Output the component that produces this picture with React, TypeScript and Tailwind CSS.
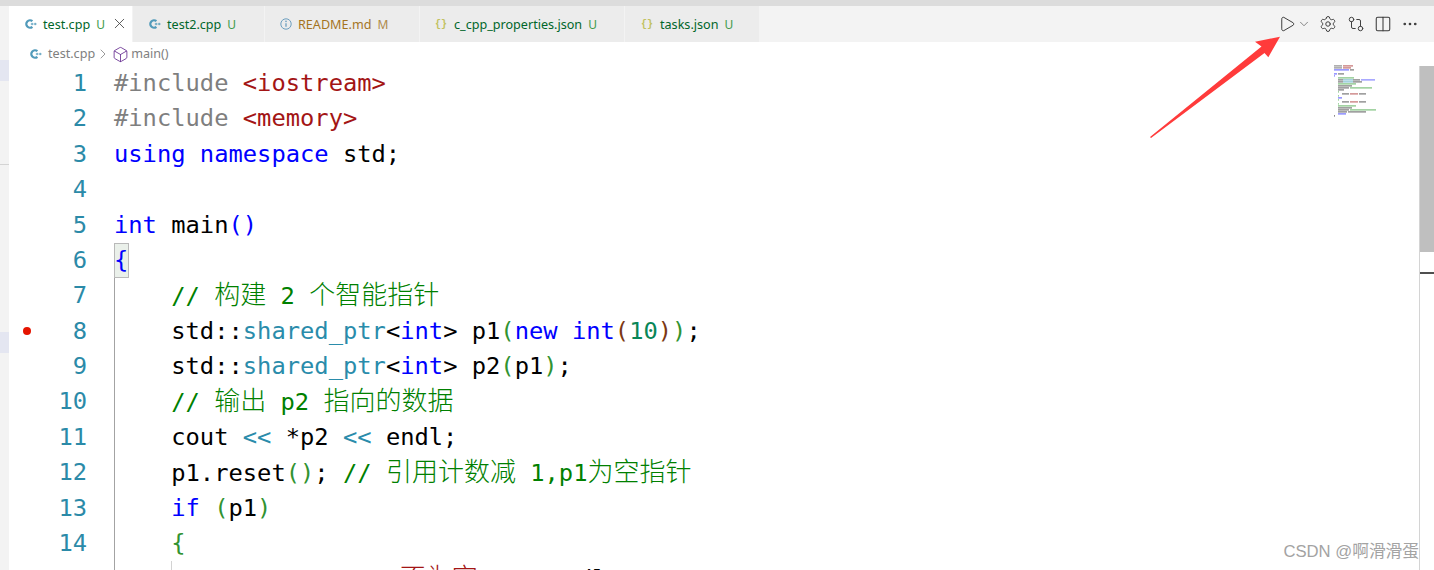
import React from "react";
import { X, Play, ChevronDown, Settings, GitCompare, Columns2, Ellipsis, Box, ChevronRight } from "lucide-react";

const G = "text-[#7f7f7f]"; // preprocessor
const R = "text-[#a31515]"; // string
const B = "text-[#0000ff]"; // keyword
const K = "text-[#000000]";
const T = "text-[#2a8cab]"; // type
const C = "text-[#008000]"; // comment
const N = "text-[#098658]"; // number
const P = "text-[#319331]"; // bracket level 2
const W = "text-[#7b3814]"; // bracket level 3
const CJ = "text-[26px] font-light";

type Seg = [string, string] | [string, string, boolean];

const lines: { s: Seg[]; guide?: boolean; bracket?: boolean; deep?: boolean; dot?: boolean }[] = [
  { s: [["#include ", G], ["<iostream>", R]] },
  { s: [["#include ", G], ["<memory>", R]] },
  { s: [["using namespace", B], [" std;", K]] },
  { s: [[" ", K]] },
  { s: [["int", B], [" main", K], ["()", B]] },
  { s: [["{", B]], bracket: true },
  { s: [["    // ", C], ["构建", C, true], [" 2 ", C], ["个智能指针", C, true]], guide: true },
  { s: [["    std::", K], ["shared_ptr", T], ["<", K], ["int", B], ["> p1", K], ["(", P], ["new int", B], ["(", W], ["10", N], [")", W], [")", P], [";", K]], guide: true, dot: true },
  { s: [["    std::", K], ["shared_ptr", T], ["<", K], ["int", B], ["> p2", K], ["(", P], ["p1", K], [")", P], [";", K]], guide: true },
  { s: [["    // ", C], ["输出", C, true], [" p2 ", C], ["指向的数据", C, true]], guide: true },
  { s: [["    cout ", K], ["<<", T], [" *p2 ", K], ["<<", T], [" endl;", K]], guide: true },
  { s: [["    p1.reset", K], ["()", P], ["; ", K], ["// ", C], ["引用计数减", C, true], [" 1,p1", C], ["为空指针", C, true]], guide: true },
  { s: [["    ", K], ["if", B], [" ", K], ["(", P], ["p1", K], [")", P]], guide: true },
  { s: [["    ", K], ["{", P]], guide: true },
  { s: [["        cout ", K], ["<<", T], [" ", K], ["\"p1 ", R], ["不为空", R, true], ["\"", R], [" ", K], ["<<", T], [" endl;", K]], guide: true, deep: true },
];

function CppIcon() {
  return (
    <svg viewBox="0 0 12 12" className="w-[12px] h-[12px] shrink-0" fill="none">
      <path d="M7.4 3.2A3.7 3.7 0 1 0 7.4 8.8" stroke="#519aba" strokeWidth="2.2" />
      <path d="M5.8 6h2.6M7.1 4.8v2.4M8.8 6h2.8M10.2 4.8v2.4" stroke="#519aba" strokeWidth="0.9" />
    </svg>
  );
}

function InfoIcon() {
  return (
    <svg viewBox="0 0 12 12" className="w-[12px] h-[12px] shrink-0" fill="none">
      <circle cx="6" cy="6" r="5.2" stroke="#6d9fbf" strokeWidth="1" />
      <path d="M6 5.2v3.6" stroke="#6d9fbf" strokeWidth="1.3" />
      <circle cx="6" cy="3.4" r="0.8" fill="#6d9fbf" />
    </svg>
  );
}

function Json() {
  return <span className="w-[12px] shrink-0 pt-[1px] text-[10px] leading-none font-['Liberation_Mono',monospace] font-bold text-[#c2c25e] whitespace-pre">{"{}"}</span>;
}

const mm: [number, number, string][][] = [
  [[0, 8, "#b0b0b0"], [9, 10, "#d59a9a"]],
  [[0, 8, "#b0b0b0"], [9, 8, "#d59a9a"]],
  [[0, 15, "#9a9aff"], [16, 4, "#a0a0a0"]],
  [],
  [[0, 3, "#9a9aff"], [4, 6, "#a0a0a0"]],
  [[0, 1, "#9a9aff"]],
  [[4, 16, "#a3d3a3"]],
  [[4, 5, "#a0a0a0"], [9, 10, "#a5d2de"], [19, 7, "#a0a0a0"], [27, 14, "#a9a9ff"]],
  [[4, 5, "#a0a0a0"], [9, 10, "#a5d2de"], [19, 9, "#a0a0a0"]],
  [[4, 18, "#a3d3a3"]],
  [[4, 14, "#a0a0a0"]],
  [[4, 11, "#a0a0a0"], [16, 22, "#a3d3a3"]],
  [[4, 6, "#a0a0a0"]],
  [[4, 1, "#a3d3a3"]],
  [[8, 7, "#a0a0a0"], [16, 8, "#d59a9a"], [25, 7, "#a0a0a0"]],
  [[4, 1, "#a3d3a3"]],
  [[4, 4, "#9a9aff"]],
  [[4, 1, "#a3d3a3"]],
  [[8, 7, "#a0a0a0"], [16, 8, "#d59a9a"], [25, 7, "#a0a0a0"]],
  [[4, 1, "#a3d3a3"]],
  [[4, 18, "#a3d3a3"]],
  [[4, 14, "#a0a0a0"]],
  [[4, 11, "#a0a0a0"], [16, 26, "#a3d3a3"]],
  [[4, 9, "#a0a0a0"], [14, 18, "#a0a0a0"]],
  [[4, 8, "#9a9aff"]],
  [[0, 1, "#8a8a8a"]],
];

function Minimap() {
  return (
    <svg width="48" height="54" className="absolute left-[1333px] top-[65px]">
      {mm.map((row, y) =>
        row.map(([x, w, c], i) => <rect key={y + "-" + i} x={x + 1} y={y * 2} width={w} height={1.7} fill={c} />)
      )}
    </svg>
  );
}

function Tab({ w, pl, active, icon, label, badge, color, badgeColor }: { w: string; pl: string; active?: boolean; icon: React.ReactNode; label: string; badge: string; color: string; badgeColor: string }) {
  return (
    <div className={`${w} ${pl} h-full flex items-center shrink-0 border-r border-[#f3f3f3] ${active ? "bg-white" : "bg-[#ececec]"}`}>
      {icon}
      <span className={`ml-[6px] pt-[2px] text-[12.6px] ${color}`}>{label}</span>
      <span className={`ml-[6px] pt-[2px] text-[12px] ${badgeColor}`}>{badge}</span>
      {active && <X className="ml-[6px] -mt-[2px] w-[17px] h-[17px] text-[#424242]" strokeWidth={1.2} />}
    </div>
  );
}

export default function App() {
  return (
    <div className="relative w-[1434px] h-[570px] overflow-hidden bg-white flex flex-col font-['Noto_Sans','Noto_Sans_CJK_SC',sans-serif]">
      <div className="h-[6px] shrink-0 bg-[#dcdcdc]" />
      <div className="flex-1 flex min-h-0">
        <div className="w-[9px] shrink-0 bg-[#f3f3f3] flex flex-col">
          <div className="h-[54px]" />
          <div className="h-[21px] bg-[#e4e6f1]" />
          <div className="h-[83px]" />
          <div className="h-[1px] bg-[#d4d4d4]" />
          <div className="h-[167px]" />
          <div className="h-[21px] bg-[#e4e6f1]" />
        </div>
        <div className="flex-1 min-w-0 flex flex-col">
          <div className="h-[36px] shrink-0 bg-[#f3f3f3] flex items-center">
            <Tab w="w-[124px]" pl="pl-[16px]" active icon={<CppIcon />} label="test.cpp" badge="U" color="text-[#00662a]" badgeColor="text-[#3f9a4a]" />
            <Tab w="w-[132px]" pl="pl-[16px]" icon={<CppIcon />} label="test2.cpp" badge="U" color="text-[#00662a]" badgeColor="text-[#3f9a4a]" />
            <Tab w="w-[155px]" pl="pl-[15px]" icon={<InfoIcon />} label="README.md" badge="M" color="text-[#a5741f]" badgeColor="text-[#b08a4a]" />
            <div className="w-[205px] h-full flex items-center pl-[15px] shrink-0 border-r border-[#f3f3f3] bg-[#ececec]">
              <Json />
              <span className="ml-[7px] pt-[2px] text-[12.6px] text-[#00662a]">c_cpp_properties.json</span>
              <span className="ml-[6px] pt-[2px] text-[12px] text-[#3f9a4a]">U</span>
            </div>
            <div className="w-[134px] h-full flex items-center pl-[16px] shrink-0 bg-[#ececec]">
              <Json />
              <span className="ml-[7px] pt-[2px] text-[12.6px] text-[#00662a]">tasks.json</span>
              <span className="ml-[6px] pt-[2px] text-[12px] text-[#3f9a4a]">U</span>
            </div>
            <div className="flex-1 flex items-center justify-end pr-[15px] text-[#3b3b3b]">
              <Play className="w-[18px] h-[18px]" strokeWidth={1.3} />
              <ChevronDown className="ml-px w-[14px] h-[14px] text-[#616161]" strokeWidth={1.3} />
              <Settings className="ml-[8px] w-[18px] h-[18px]" strokeWidth={1.3} />
              <GitCompare className="ml-[10px] w-[18px] h-[18px]" strokeWidth={1.3} />
              <Columns2 className="ml-[9px] w-[18px] h-[18px]" strokeWidth={1.4} />
              <Ellipsis className="ml-[9px] w-[18px] h-[18px]" strokeWidth={1.6} />
            </div>
          </div>
          <div className="h-[24px] shrink-0 flex items-center pl-[21px] text-[12.6px] text-[#808080]">
            <CppIcon />
            <span className="ml-[6px]">test.cpp</span>
            <ChevronRight className="w-[16px] h-[16px] text-[#808080]" strokeWidth={1.2} />
            <Box className="ml-px w-[17px] h-[17px] text-[#652d90]" strokeWidth={1.2} />
            <span className="ml-[2px]">main()</span>
          </div>
          <div className="flex-1 min-h-0 flex">
            <div className="flex-1 min-w-0 font-['DejaVu_Sans_Mono','Noto_Sans_CJK_SC',monospace] text-[23.78px] whitespace-pre">
              {lines.map((l, i) => (
                <div key={i} className="relative h-[35.38px] leading-[35.38px] flex">
                  {l.dot && <div className="absolute left-[14px] top-[13px] w-[8px] h-[8px] rounded-full bg-[#e51400]" />}
                  <div className="w-[78px] text-right text-[#2b8aa8]">{i < 14 ? i + 1 : ""}</div>
                  <div className={`ml-[27px] flex-1 ${l.guide ? "shadow-[inset_1px_0_0_#a3a3a3]" : ""}`}>
                    {l.bracket ? (
                      <span className="inline-block w-[15px] h-[35.38px] bg-[#eaf0ea] shadow-[inset_0_0_0_1px_#b9b9b9] text-[#0000ff]">{"{"}</span>
                    ) : l.deep ? (
                      <div className="ml-[57px] h-full shadow-[inset_1px_0_0_#d3d3d3]">
                        <span className="ml-[57px]">
                          {l.s.map(([t, c, cj], j) => (
                            <span key={j} className={`${c} ${cj ? CJ : ""}`}>{j === 0 ? t.trimStart() : t}</span>
                          ))}
                        </span>
                      </div>
                    ) : (
                      l.s.map(([t, c, cj], j) => (
                        <span key={j} className={`${c} ${cj ? CJ : ""}`}>{t}</span>
                      ))
                    )}
                  </div>
                </div>
              ))}
            </div>
            <div className="w-[15px] shrink-0 border-l border-[#d4d4d4] flex flex-col">
              <div className="h-[186px] bg-[#bfbfbf]" />
              <div className="h-[20px]" />
              <div className="h-[2px] bg-[#4f4f4f]" />
            </div>
          </div>
        </div>
      </div>
      <Minimap />
      <svg className="absolute left-0 top-0 pointer-events-none" width="1434" height="570">
        <polygon points="1150,137 1261.5,46.5 1255,41.7 1280,36.7 1268.3,57.3 1264.5,53 1151,138" fill="#ff3b3b" />
      </svg>
      <div className="absolute right-[15px] bottom-[6px] text-[16.7px] leading-[24px] text-[#a3a3a3] font-['Liberation_Sans','Noto_Sans_CJK_SC',sans-serif]">CSDN @啊滑滑蛋</div>
    </div>
  );
}
